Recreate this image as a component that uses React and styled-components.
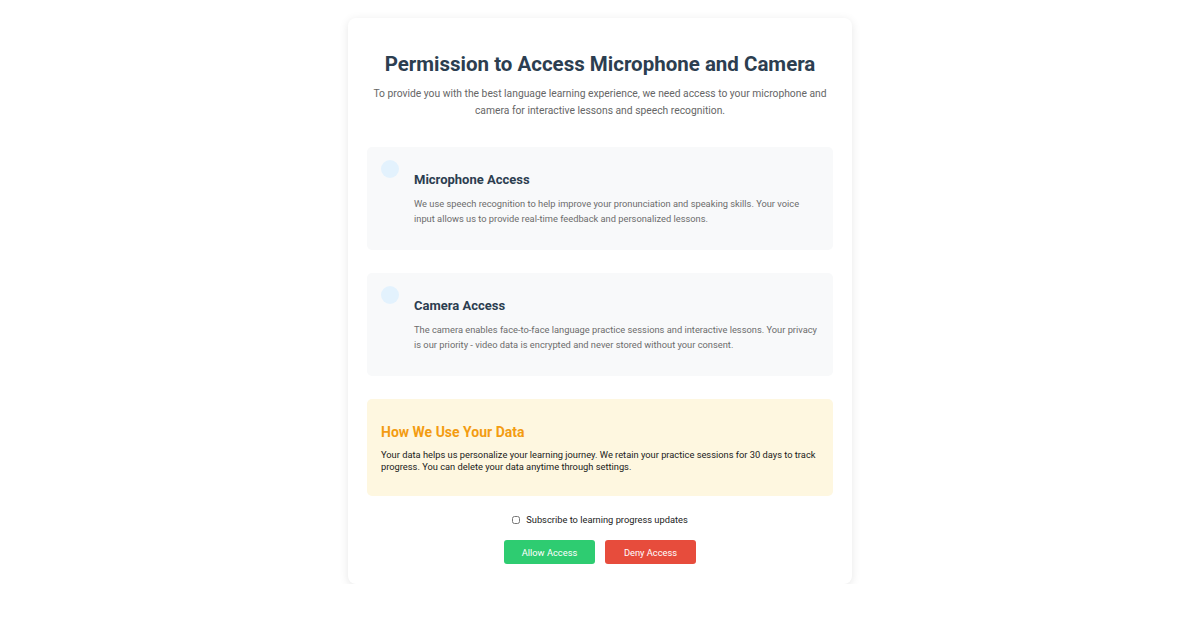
import React, { useState } from 'react';
import styled, { createGlobalStyle } from 'styled-components';

const GlobalStyle = createGlobalStyle`
    html, body {
        margin: 0;
        padding: 0;
        background: #ffffff;
        font-family: Roboto, "Liberation Sans", Arial, sans-serif;
    }
`;

const Page = styled.div`
    display: flex;
    justify-content: center;
    padding-top: 18px;
`;

const Card = styled.div`
    width: 504px;
    box-sizing: border-box;
    background: #ffffff;
    border-radius: 8px;
    box-shadow: 0 2px 10px rgba(0, 0, 0, 0.1);
    padding: 33px 19px 20px;
`;

const Title = styled.h1`
    margin: 0;
    text-align: center;
    font-size: 20.5px;
    line-height: 26px;
    font-weight: 700;
    color: #2c3e50;
`;

const Intro = styled.p`
    margin: 8px 0 0;
    text-align: center;
    font-size: 10.3px;
    line-height: 17px;
    color: #666666;
`;

const Sections = styled.div`
    display: flex;
    flex-direction: column;
    gap: 23px;
    margin-top: 28px;
`;

const Permission = styled.div`
    display: flex;
    gap: 15px;
    background: #f8f9fa;
    border-radius: 5px;
    padding: 13px 14px 24px;
`;

const IconDot = styled.div`
    flex: 0 0 18px;
    width: 18px;
    height: 18px;
    border-radius: 50%;
    background: #e3f2fd;
`;

const PermissionBody = styled.div`
    flex: 1;
    padding-top: 11px;
`;

const SectionTitle = styled.h3`
    margin: 0;
    font-size: 13px;
    line-height: 17px;
    font-weight: 700;
    color: #2c3e50;
`;

const SectionText = styled.p`
    margin: 8px 0 0;
    font-size: 9.3px;
    line-height: 15px;
    color: #6c6c6c;
`;

const DataBox = styled.div`
    background: #fef7e0;
    border-radius: 5px;
    padding: 24px 14px 24px;
`;

const DataTitle = styled.h3`
    margin: 0;
    font-size: 14px;
    line-height: 18px;
    font-weight: 700;
    color: #f39c12;
`;

const DataText = styled.p`
    margin: 8px 0 0;
    font-size: 9.3px;
    line-height: 11.5px;
    color: #1a1a1a;
`;

const Consent = styled.label`
    display: flex;
    justify-content: center;
    align-items: center;
    gap: 6px;
    margin-top: 18px;
    font-size: 9.3px;
    color: #222222;
`;

const Check = styled.input`
    margin: 0;
    width: 8px;
    height: 8px;
`;

const Actions = styled.div`
    display: flex;
    justify-content: center;
    gap: 10px;
    margin-top: 15px;
`;

const Button = styled.button`
    width: 91px;
    height: 24px;
    border: none;
    border-radius: 3px;
    background: ${p => p.$bg};
    color: #ffffff;
    font-family: inherit;
    font-size: 9.3px;
    cursor: pointer;
`;

const permissions = [
    {
        title: 'Microphone Access',
        text: 'We use speech recognition to help improve your pronunciation and speaking skills. Your voice input allows us to provide real-time feedback and personalized lessons.',
    },
    {
        title: 'Camera Access',
        text: 'The camera enables face-to-face language practice sessions and interactive lessons. Your privacy is our priority - video data is encrypted and never stored without your consent.',
    },
];

export default function App() {
    const [subscribed, setSubscribed] = useState(false);

    return (
        <>
            <GlobalStyle />
            <Page>
                <Card>
                    <Title>Permission to Access Microphone and Camera</Title>
                    <Intro>
                        To provide you with the best language learning experience, we need access to your microphone and camera for interactive lessons and speech recognition.
                    </Intro>

                    <Sections>
                        {permissions.map(item => (
                            <Permission key={item.title}>
                                <IconDot />
                                <PermissionBody>
                                    <SectionTitle>{item.title}</SectionTitle>
                                    <SectionText>{item.text}</SectionText>
                                </PermissionBody>
                            </Permission>
                        ))}

                        <DataBox>
                            <DataTitle>How We Use Your Data</DataTitle>
                            <DataText>
                                Your data helps us personalize your learning journey. We retain your practice sessions for 30 days to track progress. You can delete your data anytime through settings.
                            </DataText>
                        </DataBox>
                    </Sections>

                    <Consent>
                        <Check
                            type="checkbox"
                            checked={subscribed}
                            onChange={e => setSubscribed(e.target.checked)}
                        />
                        Subscribe to learning progress updates
                    </Consent>

                    <Actions>
                        <Button $bg="#2ecc71">Allow Access</Button>
                        <Button $bg="#e74c3c">Deny Access</Button>
                    </Actions>
                </Card>
            </Page>
        </>
    );
}
